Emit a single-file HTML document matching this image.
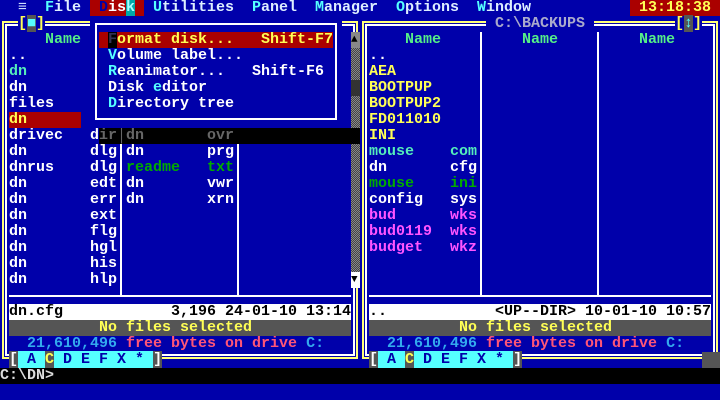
<!DOCTYPE html>
<html><head><meta charset="utf-8"><style>
*{margin:0;padding:0;box-sizing:border-box}
body{width:720px;height:400px;background:#0000aa;position:relative;overflow:hidden;font:bold 15px "Liberation Mono","DejaVu Sans Mono",monospace}
.t{position:absolute;height:16px;line-height:16px;white-space:pre;color:#fff}
.b{position:absolute}
.fo{position:absolute;border:2px solid #ffff77}
.fi{position:absolute;left:1px;top:1px;right:1px;bottom:1px;border:2px solid #fff}
.g{color:#55ee88}.w{color:#fff}.y{color:#ffff55}.c{color:#55eebb}.gr{color:#00aa00}.m{color:#ff55ff}.s{color:#666}
.h{color:#55ffff}
</style></head><body>
<!-- menu bar -->
<div class="t" style="left:18px;top:0;color:#ccddff">≡</div>
<div class="t" style="left:45px;top:0;color:#ddeeff"><span class="h">F</span>ile</div>
<div class="b" style="left:90px;top:0;width:54px;height:16px;background:#aa0000"></div>
<div class="b" style="left:126px;top:0;width:9px;height:16px;background:#00aaaa"></div>
<div class="t" style="left:99px;top:0"><span style="color:#0000aa">D</span>is<span style="color:#aaffff">k</span></div>
<div class="t" style="left:153px;top:0;color:#ddeeff"><span class="h">U</span>tilities</div>
<div class="t" style="left:252px;top:0;color:#ddeeff"><span class="h">P</span>anel</div>
<div class="t" style="left:315px;top:0;color:#ddeeff"><span class="h">M</span>anager</div>
<div class="t" style="left:396px;top:0;color:#ddeeff"><span class="h">O</span>ptions</div>
<div class="t" style="left:477px;top:0;color:#ddeeff"><span class="h">W</span>indow</div>
<div class="b" style="left:630px;top:0;width:90px;height:16px;background:#aa0000"></div>
<div class="t y" style="left:639px;top:0">13:18:38</div>

<!-- left panel frame -->
<div class="fo" style="left:2px;top:21px;width:356px;height:338px"><div class="fi"></div></div>
<!-- right panel frame -->
<div class="fo" style="left:362px;top:21px;width:356px;height:338px"><div class="fi"></div></div>

<!-- separators -->
<div class="b" style="left:120px;top:32px;width:2px;height:264px;background:#fff"></div>
<div class="b" style="left:237px;top:32px;width:2px;height:264px;background:#fff"></div>
<div class="b" style="left:9px;top:295px;width:342px;height:2px;background:#fff"></div>
<div class="b" style="left:480px;top:32px;width:2px;height:264px;background:#fff"></div>
<div class="b" style="left:597px;top:32px;width:2px;height:264px;background:#fff"></div>
<div class="b" style="left:369px;top:295px;width:342px;height:2px;background:#fff"></div>

<!-- left scrollbar -->
<div class="b" style="left:351px;top:32px;width:9px;height:256px;background:repeating-conic-gradient(#888 0 25%,#444 0 50%) 0 0/2px 2px"></div>
<div class="b" style="left:351px;top:32px;width:9px;height:16px;background:#888"></div>
<div class="t" style="left:351px;top:32px;color:#000;font-size:11px">▲</div>
<div class="b" style="left:351px;top:80px;width:9px;height:16px;background:#333"></div>
<div class="b" style="left:351px;top:272px;width:9px;height:16px;background:#fff"></div>
<div class="t" style="left:351px;top:272px;color:#000;font-size:11px">▼</div>

<!-- titles -->
<div class="t" style="left:18px;top:16px;background:#0000aa"><span class="y">[</span><span style="background:#555;color:#55ffff">■</span><span class="y">]</span></div>
<div class="t" style="left:486px;top:16px;background:#0000aa;color:#aaaacc"> C:\BACKUPS </div>
<div class="t" style="left:675px;top:16px;background:#0000aa"><span class="y">[</span><span style="background:#555;color:#55ffff">↕</span><span class="y">]</span></div>

<!-- headers -->
<div class="t g" style="left:45px;top:32px">Name</div>
<div class="t g" style="left:405px;top:32px">Name</div>
<div class="t g" style="left:522px;top:32px">Name</div>
<div class="t g" style="left:639px;top:32px">Name</div>

<!-- left panel files -->
<div class="t" style="left:9px;top:48px">..</div>
<div class="t c" style="left:9px;top:64px">dn</div>
<div class="t" style="left:9px;top:80px">dn</div>
<div class="t" style="left:9px;top:96px">files</div>
<div class="b" style="left:9px;top:112px;width:72px;height:16px;background:#aa0000"></div>
<div class="t y" style="left:9px;top:112px">dn</div>
<div class="t" style="left:9px;top:128px">drivec   d</div>
<div class="t" style="left:9px;top:144px">dn       dlg</div>
<div class="t" style="left:9px;top:160px">dnrus    dlg</div>
<div class="t" style="left:9px;top:176px">dn       edt</div>
<div class="t" style="left:9px;top:192px">dn       err</div>
<div class="t" style="left:9px;top:208px">dn       ext</div>
<div class="t" style="left:9px;top:224px">dn       flg</div>
<div class="t" style="left:9px;top:240px">dn       hgl</div>
<div class="t" style="left:9px;top:256px">dn       his</div>
<div class="t" style="left:9px;top:272px">dn       hlp</div>
<div class="t" style="left:126px;top:144px">dn       prg</div>
<div class="t gr" style="left:126px;top:160px">readme   txt</div>
<div class="t" style="left:126px;top:176px">dn       vwr</div>
<div class="t" style="left:126px;top:192px">dn       xrn</div>

<!-- shadow row -->
<div class="b" style="left:99px;top:128px;width:261px;height:16px;background:#000"></div>
<div class="t s" style="left:99px;top:128px">ir│dn       ovr</div>

<!-- dropdown -->
<div class="b" style="left:90px;top:16px;width:252px;height:112px;background:#0000aa"></div>
<div class="b" style="left:95px;top:23px;width:242px;height:97px;border:2px solid #fff"></div>
<div class="b" style="left:99px;top:32px;width:234px;height:16px;background:#aa0000"></div>
<div class="b" style="left:108px;top:32px;width:9px;height:16px;background:#000"></div>
<div class="t y" style="left:108px;top:32px"><span style="color:#335">F</span>ormat disk...   Shift-F7</div>
<div class="t" style="left:108px;top:48px"><span class="h">V</span>olume label...</div>
<div class="t" style="left:108px;top:64px"><span class="h">R</span>eanimator...   Shift-F6</div>
<div class="t" style="left:108px;top:80px">Disk <span class="h">e</span>ditor</div>
<div class="t" style="left:108px;top:96px"><span class="h">D</span>irectory tree</div>

<!-- right panel files -->
<div class="t" style="left:369px;top:48px">..</div>
<div class="t y" style="left:369px;top:64px">AEA</div>
<div class="t y" style="left:369px;top:80px">BOOTPUP</div>
<div class="t y" style="left:369px;top:96px">BOOTPUP2</div>
<div class="t y" style="left:369px;top:112px">FD011010</div>
<div class="t y" style="left:369px;top:128px">INI</div>
<div class="t c" style="left:369px;top:144px">mouse    com</div>
<div class="t" style="left:369px;top:160px">dn       cfg</div>
<div class="t gr" style="left:369px;top:176px">mouse    ini</div>
<div class="t" style="left:369px;top:192px">config   sys</div>
<div class="t m" style="left:369px;top:208px">bud      wks</div>
<div class="t m" style="left:369px;top:224px">bud0119  wks</div>
<div class="t m" style="left:369px;top:240px">budget   wkz</div>

<!-- info rows -->
<div class="b" style="left:9px;top:304px;width:342px;height:16px;background:#fff"></div>
<div class="t" style="left:9px;top:304px;color:#000">dn.cfg</div>
<div class="t" style="left:171px;top:304px;color:#000">3,196 24-01-10 13:14</div>
<div class="b" style="left:9px;top:320px;width:342px;height:16px;background:#555"></div>
<div class="t y" style="left:99px;top:320px">No files selected</div>
<div class="t" style="left:27px;top:336px"><span style="color:#33aaee">21,610,496 </span><span style="color:#ff5577">free bytes on drive </span><span style="color:#33aaee">C:</span></div>

<div class="b" style="left:369px;top:304px;width:342px;height:16px;background:#fff"></div>
<div class="t" style="left:369px;top:304px;color:#000">..</div>
<div class="t" style="left:495px;top:304px;color:#000">&lt;UP--DIR&gt; 10-01-10 10:57</div>
<div class="b" style="left:369px;top:320px;width:342px;height:16px;background:#555"></div>
<div class="t y" style="left:459px;top:320px">No files selected</div>
<div class="t" style="left:387px;top:336px"><span style="color:#33aaee">21,610,496 </span><span style="color:#ff5577">free bytes on drive </span><span style="color:#33aaee">C:</span></div>

<!-- drive bars -->
<div class="t" style="left:9px;top:352px;color:#0000aa"><span style="background:#555;color:#fff">[</span><span style="background:#55ffff"> A </span><span style="background:#555;color:#ffff55">C</span><span style="background:#55ffff"> D E F X * </span><span style="background:#555;color:#fff">]</span></div>
<div class="t" style="left:369px;top:352px;color:#0000aa"><span style="background:#555;color:#fff">[</span><span style="background:#55ffff"> A </span><span style="background:#555;color:#ffff55">C</span><span style="background:#55ffff"> D E F X * </span><span style="background:#555;color:#fff">]</span></div>
<div class="b" style="left:702px;top:352px;width:18px;height:16px;background:#555"></div>

<!-- command line -->
<div class="b" style="left:0;top:368px;width:720px;height:16px;background:#000"></div>
<div class="t" style="left:0;top:368px;color:#ddd">C:\DN&gt;</div>
</body></html>
